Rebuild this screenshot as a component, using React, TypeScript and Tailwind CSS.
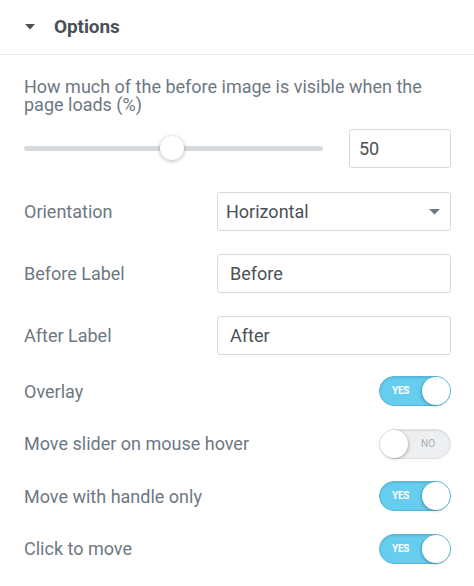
import React from "react";

const font = { fontFamily: "Roboto, 'Noto Sans', Arial, sans-serif" };

function Toggle({ on }: { on: boolean }) {
  if (on) {
    return (
      <div className="relative w-[72px] h-[30px] rounded-full bg-[#66cdee] border border-[#55b8d8] shadow-[inset_0_1px_2px_rgba(0,0,0,0.12)]">
        <span className="absolute left-[12px] top-[8px] text-[10px] leading-[12px] font-bold text-white tracking-[-0.3px]">YES</span>
        <span className="absolute right-[0px] top-[0px] w-[28px] h-[28px] rounded-full bg-white shadow-[-1px_1px_3px_rgba(0,0,0,0.25)]" />
      </div>
    );
  }
  return (
    <div className="relative w-[72px] h-[30px] rounded-full bg-[#eeeff1] border border-[#dcdfe2] shadow-[inset_0_1px_2px_rgba(0,0,0,0.08)]">
      <span className="absolute left-[41px] top-[8px] text-[10px] leading-[12px] text-[#a9aeb3]">NO</span>
      <span className="absolute left-[0px] top-[0px] w-[28px] h-[28px] rounded-full bg-white shadow-[1px_1px_3px_rgba(0,0,0,0.25)]" />
    </div>
  );
}

function InputRow({ label, value }: { label: string; value: string }) {
  return (
    <div className="flex items-center justify-between h-[39px] mt-[23px]">
      <span className="text-[18px] text-[#6d7882]">{label}</span>
      <div className="w-[234px] h-[39px] border border-[#d5dadf] rounded-[3px] flex items-center pl-[12px] text-[18px] text-[#495157]">
        {value}
      </div>
    </div>
  );
}

function ToggleRow({ label, on, first }: { label: string; on: boolean; first?: boolean }) {
  return (
    <div className={`flex items-center justify-between h-[30px] ${first ? "mt-[21px]" : "mt-[22.5px]"}`}>
      <span className="text-[18px] text-[#6d7882]">{label}</span>
      <Toggle on={on} />
    </div>
  );
}

export default function App() {
  return (
    <div className="w-[474px] h-[586px] bg-white overflow-hidden" style={font}>
      <div className="h-[55px] border-b border-[#e6e9ec] flex items-center pl-[25px]">
        <svg width="10" height="6" viewBox="0 0 10 6" className="mr-[19px]">
          <path d="M0 0 L10 0 L5 5.5 Z" fill="#495157" />
        </svg>
        <span className="text-[19px] font-bold text-[#495157] tracking-[-0.1px]">Options</span>
      </div>
      <div className="pl-[24px] pr-[23px]">
        <div className="mt-[23px] text-[18px] leading-[18px] text-[#6d7882]">
          How much of the before image is visible when the page loads (%)
        </div>
        <div className="flex items-center justify-between h-[39px] mt-[15px]">
          <div className="relative w-[299px] h-[5px] rounded-full bg-[#d5dadf]">
            <span className="absolute left-[136px] top-[-10px] w-[24px] h-[24px] rounded-full bg-white shadow-[0_1px_4px_rgba(0,0,0,0.3)]" />
          </div>
          <div className="w-[102px] h-[39px] border border-[#d5dadf] rounded-[3px] flex items-center pl-[9px] text-[18px] text-[#495157]">
            50
          </div>
        </div>
        <div className="flex items-center justify-between h-[39px] mt-[24px]">
          <span className="text-[18px] text-[#6d7882]">Orientation</span>
          <div className="w-[234px] h-[39px] border border-[#d5dadf] rounded-[3px] flex items-center justify-between pl-[8px] pr-[10px] text-[18px] text-[#495157]">
            <span>Horizontal</span>
            <svg width="11" height="6" viewBox="0 0 11 6">
              <path d="M0 0 L11 0 L5.5 5.5 Z" fill="#6d7882" />
            </svg>
          </div>
        </div>
        <InputRow label="Before Label" value="Before" />
        <InputRow label="After Label" value="After" />
        <ToggleRow label="Overlay" on first />
        <ToggleRow label="Move slider on mouse hover" on={false} />
        <ToggleRow label="Move with handle only" on />
        <ToggleRow label="Click to move" on />
      </div>
    </div>
  );
}
